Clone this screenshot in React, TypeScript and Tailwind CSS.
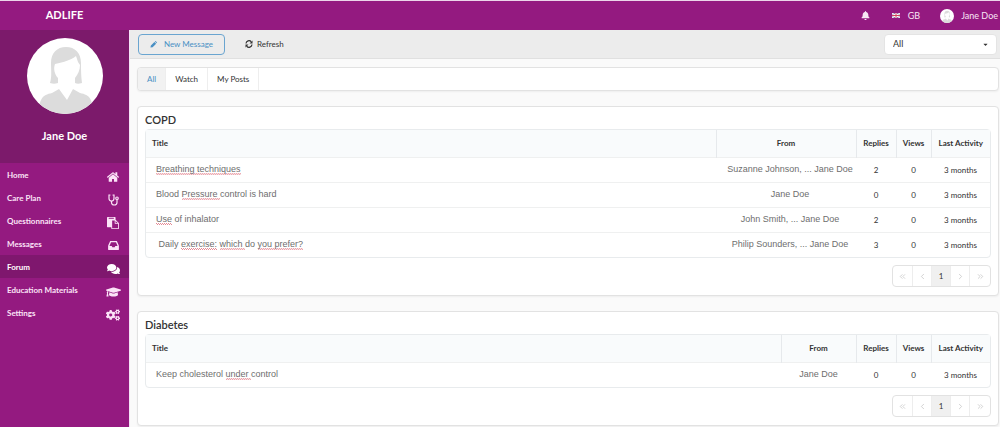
import React from "react";
import { ChevronLeft, ChevronRight, ChevronsLeft, ChevronsRight } from "lucide-react";
import { FaBell, FaCaretDown, FaCogs, FaComments, FaGraduationCap } from "react-icons/fa";

type IconProps = { className?: string };

const HomeIcon = ({ className }: IconProps) => (
  <svg viewBox="90 230 1612 1330" className={className} fill="currentColor" aria-hidden="true">
    <path d="M1472 992v480q0 26-19 45t-45 19h-384v-384H768v384H384q-26 0-45-19t-19-45V992q0-1 .5-3t.5-3l575-474 575 474q1 2 1 6zm223-69l-62 74q-8 9-21 11h-3q-13 0-21-7L896 424l-692 577q-12 8-24 7-13-2-21-11l-62-74q-8-10-7-23.5T101 878l719-599q32-26 76-26t76 26l244 204V288q0-14 9-23t23-9h192q14 0 23 9t9 23v408l219 182q10 8 11 21.5t-7 23.5z" />
  </svg>
);

const StethoscopeIcon = ({ className }: IconProps) => (
  <svg viewBox="0 0 22 24" className={className} fill="none" stroke="currentColor" strokeWidth="2.4" strokeLinecap="round" aria-hidden="true">
    <path d="M4 2H2v7c0 3 2 5 5 5s5-2 5-5V2h-2M7 14v3c0 3 2 5 5.500 5s5.500-2 5.500-5v-6" />
    <circle cx="18" cy="8.500" r="2.500" />
  </svg>
);

const PasteIcon = ({ className }: IconProps) => (
  <svg viewBox="0 0 1792 1792" className={className} fill="currentColor" aria-hidden="true">
    <path d="M768 1664h896v-640h-416q-40 0-68-28t-28-68V512H768v1152zm256-1440v-64q0-13-9.500-22.500T992 128H288q-13 0-22.500 9.500T256 160v64q0 13 9.500 22.500T288 256h704q13 0 22.500-9.500t9.500-22.500zm256 672h299l-299-299v299zm512 128v672q0 40-28 68t-68 28H736q-40 0-68-28t-28-68v-160H96q-40 0-68-28t-28-68V96q0-40 28-68T96 0h1088q40 0 68 28t28 68v328q21 13 36 28l408 408q28 28 48 76t20 88z" />
  </svg>
);

const InboxIcon = ({ className }: IconProps) => (
  <svg viewBox="128 256 1536 1280" className={className} fill="currentColor" aria-hidden="true">
    <path d="M1151 960h316q-1-3-2.500-8t-2.500-8l-212-496H546L334 944q-1 2-2.500 8t-2.500 8h316l95 192h320zm513 30v482q0 26-19 45t-45 19H192q-26 0-45-19t-19-45V990q0-62 25-123l238-552q10-25 36.500-42t52.500-17h832q26 0 52.500 17t36.500 42l238 552q25 61 25 123z" />
  </svg>
);

const PencilIcon = ({ className }: IconProps) => (
  <svg viewBox="0 0 16 16" className={className} fill="currentColor" aria-hidden="true">
    <path d="M1 15l1-5 8-8 4 4-8 8zM11 1l1-1q1 0 2 1l1 1q1 1 1 2l-1 1z" />
  </svg>
);

const navItems = [
  { label: "Home", icon: HomeIcon, size: "h-[10px] w-3" },
  { label: "Care Plan", icon: StethoscopeIcon, size: "h-3 w-[11px]" },
  { label: "Questionnaires", icon: PasteIcon, size: "size-3" },
  { label: "Messages", icon: InboxIcon, size: "h-[9px] w-[11px]" },
  { label: "Forum", icon: FaComments, size: "h-3 w-[13px]", active: true },
  { label: "Education Materials", icon: FaGraduationCap, size: "h-3 w-[15px]" },
  { label: "Settings", icon: FaCogs, size: "h-3 w-[14px]" },
];

const tabs = ["All", "Watch", "My Posts"];

// words wrapped in * get the spell-check squiggle
const forums = [
  {
    name: "COPD",
    fromHead: "w-[140px]",
    fromCell: "pl-2",
    topics: [
      { title: "*Breathing techniques*", from: "Suzanne Johnson, ... Jane Doe", replies: 2 },
      { title: "Blood *Pressure *control is hard", from: "Jane Doe", replies: 0 },
      { title: "*Use* of inhalator", from: "John Smith, ... Jane Doe", replies: 2 },
      { title: "\u00a0Daily *exercise:* *which *do *you prefer?*", from: "Philip Sounders, ... Jane Doe", replies: 3 },
    ],
  },
  {
    name: "Diabetes",
    fromHead: "w-[75px]",
    fromCell: "",
    topics: [{ title: "Keep cholesterol *under *control", from: "Jane Doe", replies: 0 }],
  },
];

const pages = [
  { label: "First page", icon: ChevronsLeft },
  { label: "Previous page", icon: ChevronLeft },
  { label: "Page 1" },
  { label: "Next page", icon: ChevronRight },
  { label: "Last page", icon: ChevronsRight },
];

const Avatar = ({ className }: IconProps) => (
  <svg viewBox="0 0 76 76" className={className} aria-hidden="true">
    <clipPath id="face">
      <circle cx="38" cy="38" r="38" />
    </clipPath>
    <g clipPath="url(#face)">
      <rect width="76" height="76" fill="#fff" />
      <path
        d="M23 45c2-6 1-13 1-20C24 15 30 9 39 9s15 6 15 16c0 7 0 13 1 20-3 1-5 1-7 0v-5c3-4 5-8 5-13l-2-3-2-6c-5 4-12 6-21 8-2 5 0 11 3 14v5c-3 1-5 1-8 0z"
        fill="#dcdcdc"
      />
      <path d="M12 76c0-15 3-19 13-21l7-4 8 11 6-11 7 4c10 2 13 6 13 21z" fill="#dcdcdc" />
    </g>
  </svg>
);

const Flag = () => (
  <svg viewBox="0 0 16 10" className="h-[5px] w-2" aria-hidden="true">
    <rect width="16" height="10" fill="#8d7fb0" />
    <path d="M0 0l16 10M16 0L0 10" stroke="#fff" strokeWidth="2" />
    <path d="M8 0v10M0 5h16" stroke="#fff" strokeWidth="4" />
    <path d="M8 0v10M0 5h16" stroke="#d0455f" strokeWidth="2" />
  </svg>
);

const RefreshIcon = () => (
  <svg viewBox="0 0 16 16" className="size-2" fill="none" stroke="currentColor" strokeWidth="2.4" aria-hidden="true">
    <path d="M2 7a6 6 0 0 1 10.500-3.500M14 9a6 6 0 0 1-10.500 3.500" />
    <path d="M15 1v6H9zM1 15V9h6z" fill="currentColor" stroke="none" />
  </svg>
);

const Squiggles = ({ text }: { text: string }) => (
  <>
    {text.split("*").map((part, i) =>
      i % 2 ? (
        <span
          key={i}
          className="bg-[conic-gradient(#e58a94_25%,transparent_0_50%,#e58a94_0_75%,transparent_0)] bg-[length:2px_2px] bg-bottom bg-repeat-x pb-px"
        >
          {part}
        </span>
      ) : (
        part
      )
    )}
  </>
);

const Pagination = () => (
  <nav aria-label="Pages" className="mt-[7px] flex justify-end">
    <div className="flex h-[22px] divide-x divide-[#ededed] overflow-hidden rounded-sm border border-[#e2e2e2] text-[8px]">
      {pages.map(({ label, icon: Icon }) => (
        <button
          key={label}
          aria-label={label}
          className={`flex w-[19px] items-center justify-center first:w-5 last:w-5 ${
            Icon ? "text-[#c4c4c4]" : "bg-[#f0f0f0] text-[#333]"
          }`}
        >
          {Icon ? <Icon className="size-[9px]" strokeWidth={2} /> : "1"}
        </button>
      ))}
    </div>
  </nav>
);

const App: React.FC = () => {
  return (
    <div className="flex min-h-screen flex-col bg-[#fafafa] font-['Lato',sans-serif] text-[8px] text-[#333]">
      <header className="flex h-[30px] items-center border-t border-[#ecd5ea] bg-[#941a80] text-white">
        <div className="w-[129px] text-center text-[11px] font-bold">ADLIFE</div>
        <div className="ml-auto flex items-center pr-[2px] text-[9px] text-[#f8e6f5]">
          <button aria-label="Notifications">
            <FaBell className="size-[9px]" />
          </button>
          <button className="ml-[22px] flex items-center gap-2">
            <Flag />
            GB
          </button>
          <button className="ml-5 flex items-center gap-[7px]">
            <Avatar className="size-[14px]" />
            Jane Doe
          </button>
        </div>
      </header>

      <div className="flex grow">
        <aside className="w-[129px] shrink-0 bg-[#941a80] text-white">
          <div className="flex h-[133px] flex-col items-center bg-[#7c1a6b] pt-2">
            <Avatar className="size-[76px]" />
            <p className="mt-[14px] text-[11px] leading-4 font-bold">Jane Doe</p>
          </div>
          <nav>
            {navItems.map(({ label, icon: Icon, size, active }) => (
              <a
                key={label}
                href="#"
                className={`flex h-[23px] items-center justify-between pr-2 pl-[7px] font-bold ${
                  active ? "bg-[#7f176e] text-white" : "text-[#fbe3f7]"
                }`}
              >
                {label}
                <span className="flex w-4 justify-center pt-1">
                  <Icon className={`shrink-0 ${size}`} />
                </span>
              </a>
            ))}
          </nav>
        </aside>

        <main className="min-w-0 grow border-l border-[#f5e3f7]">
          <div className="flex h-[29px] items-center border-b border-[#e0e0e0] bg-[#ececec] pr-[3px] pl-2">
            <button className="flex h-[21px] w-[87px] items-center justify-center gap-[7px] rounded-sm border border-[#6aa5d0] text-[#4a90c4]">
              <PencilIcon className="size-[7px]" />
              New Message
            </button>
            <button className="ml-5 flex items-center gap-1">
              <RefreshIcon />
              Refresh
            </button>
            <div className="relative ml-auto">
              <select
                aria-label="Filter"
                className="h-[21px] w-[113px] appearance-none rounded-sm border border-[#e4e4e4] bg-white px-2 text-[9px]"
              >
                <option>All</option>
              </select>
              <FaCaretDown className="pointer-events-none absolute top-[7px] right-2 size-[7px]" />
            </div>
          </div>

          <div className="flex flex-col gap-[15px] pt-2 pr-px pl-[7px]">
            <div className="flex h-6 divide-x divide-[#eee] overflow-hidden rounded-sm border border-[#e2e2e2] bg-white shadow-xs">
              {tabs.map((tab) => (
                <button
                  key={tab}
                  className={`px-[9px] ${tab === "All" ? "bg-[#f2f2f2] text-[#4a90c4]" : ""}`}
                >
                  {tab}
                </button>
              ))}
              <div />
            </div>

            {forums.map((forum) => (
              <section
                key={forum.name}
                className="rounded-sm border border-[#e2e2e2] bg-white px-[7px] pt-1 pb-2 shadow-xs"
              >
                <h2 className="text-[11px] leading-[18px] font-semibold">{forum.name}</h2>
                <div className="rounded-sm border border-[#e8ebed]">
                  <table className="w-full table-fixed">
                    <thead>
                      <tr className="h-[27px] divide-x divide-[#e6e9ec] bg-[#f9fbfc]">
                        <th className="pl-[6px] text-left">Title</th>
                        <th className={forum.fromHead}>From</th>
                        <th className="w-[40px]">Replies</th>
                        <th className="w-[35px]">Views</th>
                        <th className="w-[59px]">Last Activity</th>
                      </tr>
                    </thead>
                    <tbody>
                      {forum.topics.map((topic) => (
                        <tr key={topic.title} className="h-[25px] border-t border-[#eff0f0] text-center">
                          <td className="pl-[10px] text-left font-['Liberation_Sans',sans-serif] text-[9px] text-[#6e6e6e]">
                            <Squiggles text={topic.title} />
                          </td>
                          <td
                            className={`font-['Liberation_Sans',sans-serif] text-[9px] whitespace-nowrap text-[#6e6e6e] ${forum.fromCell}`}
                          >
                            {topic.from}
                          </td>
                          <td>{topic.replies}</td>
                          <td>0</td>
                          <td>3 months</td>
                        </tr>
                      ))}
                    </tbody>
                  </table>
                </div>
                <Pagination />
              </section>
            ))}
          </div>
        </main>
      </div>
    </div>
  );
};

export default App;
